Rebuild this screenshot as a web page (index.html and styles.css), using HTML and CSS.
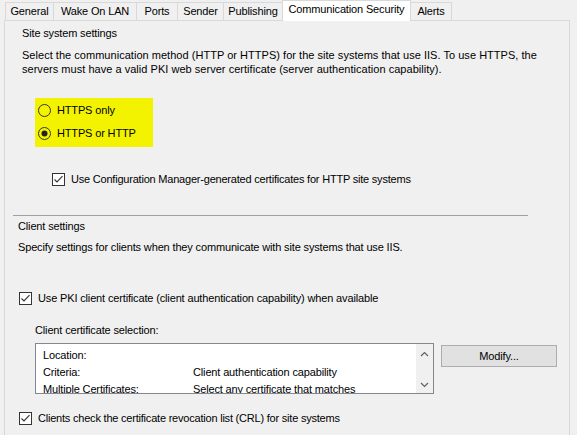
FILE: index.html
```html
<!DOCTYPE html>
<html>
<head>
<meta charset="utf-8">
<link rel="stylesheet" href="styles.css">
</head>
<body>
<div class="tabs">
  <div class="tab w-general">General</div>
  <div class="tab w-wol">Wake On LAN</div>
  <div class="tab w-ports">Ports</div>
  <div class="tab w-sender">Sender</div>
  <div class="tab w-pub">Publishing</div>
  <div class="tab sel w-comm">Communication Security</div>
  <div class="tab w-alerts">Alerts</div>
</div>
<div class="panel">
  <div class="title-site">Site system settings</div>
  <p class="desc">Select the communication method (HTTP or HTTPS) for the site systems that use IIS. To use HTTPS, the<br>servers must have a valid PKI web server certificate (server authentication capability).</p>
  <div class="highlight">
    <div class="opt-row"><svg class="radio" width="13" height="13" viewBox="0 0 13 13"><circle cx="6.5" cy="6.5" r="6" fill="none" stroke="#333" stroke-width="1"/></svg><span>HTTPS only</span></div>
    <div class="opt-row"><svg class="radio" width="13" height="13" viewBox="0 0 13 13"><circle cx="6.5" cy="6.5" r="6" fill="none" stroke="#333" stroke-width="1"/><circle cx="6.5" cy="6.5" r="3" fill="#222"/></svg><span>HTTPS or HTTP</span></div>
  </div>
  <div class="opt-row check-config"><svg class="cb" width="13" height="13" viewBox="0 0 13 13"><rect x="0.5" y="0.5" width="12" height="12" fill="#fff" stroke="#333"/><polyline points="2.5,6.5 5,9 10.5,3.2" fill="none" stroke="#333" stroke-width="1.1"/></svg><span class="tight">Use Configuration Manager-generated certificates for HTTP site systems</span></div>
  <div class="sep"></div>
  <div class="title-client">Client settings</div>
  <div class="desc-client">Specify settings for clients when they communicate with site systems that use IIS.</div>
  <div class="opt-row check-pki"><svg class="cb" width="13" height="13" viewBox="0 0 13 13"><rect x="0.5" y="0.5" width="12" height="12" fill="#fff" stroke="#333"/><polyline points="2.5,6.5 5,9 10.5,3.2" fill="none" stroke="#333" stroke-width="1.1"/></svg><span>Use PKI client certificate (client authentication capability) when available</span></div>
  <div class="sub-label">Client certificate selection:</div>
  <div class="cert-row">
    <div class="listbox">
      <div class="lb-content">
        <div class="lb-line"><span class="lb-key">Location:</span><span></span></div>
        <div class="lb-line"><span class="lb-key">Criteria:</span><span>Client authentication capability</span></div>
        <div class="lb-line"><span class="lb-key">Multiple Certificates:</span><span>Select any certificate that matches</span></div>
      </div>
      <div class="scrollbar">
        <svg width="17" height="12" viewBox="0 0 17 12"><polyline points="5,8 8.5,4.5 12,8" fill="none" stroke="#606060" stroke-width="1.2"/></svg>
        <svg width="17" height="12" viewBox="0 0 17 12"><polyline points="5,4 8.5,7.5 12,4" fill="none" stroke="#606060" stroke-width="1.2"/></svg>
      </div>
    </div>
    <button class="btn">Modify...</button>
  </div>
  <div class="opt-row check-crl"><svg class="cb" width="13" height="13" viewBox="0 0 13 13"><rect x="0.5" y="0.5" width="12" height="12" fill="#fff" stroke="#333"/><polyline points="2.5,6.5 5,9 10.5,3.2" fill="none" stroke="#333" stroke-width="1.1"/></svg><span class="tight">Clients check the certificate revocation list (CRL) for site systems</span></div>
</div>
</body>
</html>
```

FILE: styles.css
```css
html, body {
  margin: 0;
  padding: 0;
}
body {
  background: #f0f0f0;
  color: #000;
  font-family: "Liberation Sans", Arial, sans-serif;
  font-size: 11px;
  line-height: 15px;
  letter-spacing: -0.15px;
  width: 577px;
  height: 435px;
  overflow: hidden;
}
.tabs {
  display: flex;
  align-items: flex-end;
  height: 20px;
  padding-left: 5px;
}
.tab {
  box-sizing: border-box;
  height: 18px;
  border: 1px solid #d9d9d9;
  border-bottom: none;
  background: #f0f0f0;
  line-height: 17px;
  text-align: center;
  white-space: nowrap;
  margin-left: -1px;
}
.tab:first-child { margin-left: 0; }
.tab.sel {
  height: 21px;
  margin-bottom: -1px;
  background: #fff;
  position: relative;
  z-index: 1;
}
.w-general { width: 49px; }
.w-wol { width: 84px; }
.w-ports { width: 42px; }
.w-sender { width: 47px; }
.w-pub { width: 60px; }
.w-comm { width: 129px; }
.w-alerts { width: 42px; }

.panel {
  box-sizing: border-box;
  margin-left: 4px;
  width: 566px;
  height: 430px;
  border: 1px solid #d9d9d9;
  overflow: hidden;
}
.title-site {
  margin: 5px 0 0 17px;
}
.desc {
  margin: 7px 0 0 17px;
  line-height: 14px;
  white-space: nowrap;
  letter-spacing: 0.03px;
}
.highlight {
  box-sizing: border-box;
  margin: 22px 0 0 30px;
  width: 118px;
  height: 49px;
  background: #f3f300;
  padding: 6px 0 0 3px;
  display: flex;
  flex-direction: column;
  gap: 10px;
}
.opt-row {
  display: flex;
  align-items: center;
  height: 13px;
  line-height: 13px;
  white-space: nowrap;
}
.tight { letter-spacing: -0.21px; }
.radio { flex: none; margin-right: 6px; }
.cb { flex: none; margin-right: 6px; }
.check-config { margin: 26px 0 0 47px; }
.sep {
  margin: 29px 0 0 8px;
  width: 515px;
  height: 1px;
  background: #a0a0a0;
}
.title-client { margin: 3px 0 0 13px; }
.desc-client { margin: 6px 0 0 13px; }
.check-pki { margin: 37px 0 0 14px; }
.sub-label { margin: 18px 0 0 30px; }
.cert-row {
  display: flex;
  align-items: flex-start;
  margin: 5px 0 0 30px;
}
.listbox {
  box-sizing: border-box;
  width: 399px;
  height: 51px;
  border: 1px solid #828790;
  background: #fff;
  display: flex;
  overflow: hidden;
}
.lb-content {
  flex: 1;
  padding: 3px 0 0 7px;
  line-height: 17px;
  white-space: nowrap;
}
.lb-line { display: flex; }
.lb-key { width: 150px; flex: none; }
.scrollbar {
  width: 17px;
  flex: none;
  background: #f0f0f0;
  display: flex;
  flex-direction: column;
  justify-content: space-between;
  padding: 4px 0 2px;
}
.scrollbar svg { display: block; }
.btn {
  box-sizing: border-box;
  margin: 2px 0 0 7px;
  width: 116px;
  height: 22px;
  border: 1px solid #adadad;
  background: #e1e1e1;
  font: inherit;
  letter-spacing: inherit;
  color: #000;
  padding: 0;
}
.check-crl { margin: 18px 0 0 14px; }
```
